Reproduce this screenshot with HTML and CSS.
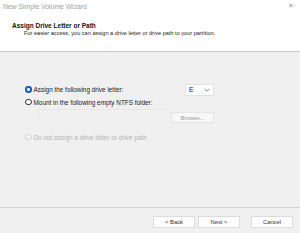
FILE: index.html
```html
<!DOCTYPE html>
<html>
<head>
<meta charset="utf-8">
<link rel="stylesheet" href="styles.css">
</head>
<body>
<div class="window">
  <div class="header">
    <div class="titlebar">
      <span class="title">New Simple Volume Wizard</span>
      <span class="close">&#x2715;</span>
    </div>
    <div class="heading">Assign Drive Letter or Path</div>
    <div class="subheading">For easier access, you can assign a drive letter or drive path to your partition.</div>
  </div>
  <div class="content">
    <div class="row row1">
      <span class="radio checked"></span>
      <span class="label">Assign the following drive letter:</span>
      <span class="select"><span>E</span><svg class="chev" width="6" height="4" viewBox="0 0 6 4"><path d="M0.5 0.8 L3 3.2 L5.5 0.8" fill="none" stroke="#555" stroke-width="0.7"/></svg></span>
    </div>
    <div class="row row2">
      <span class="radio"></span>
      <span class="label">Mount in the following empty NTFS folder:</span>
    </div>
    <div class="row row-field">
      <span class="field"></span>
      <span class="btn browse">Browse...</span>
    </div>
    <div class="row row3 disabled">
      <span class="radio off"></span>
      <span class="label">Do not assign a drive letter or drive path</span>
    </div>
  </div>
  <div class="footer">
    <span class="btn">&lt; Back</span>
    <span class="btn">Next &gt;</span>
    <span class="btn cancel">Cancel</span>
  </div>
</div>
</body>
</html>
```
FILE: styles.css
```css
html, body {
  margin: 0;
  padding: 0;
}
body {
  width: 300px;
  height: 233px;
  overflow: hidden;
  background: #f0f0f0;
  font-family: "Liberation Sans", Arial, sans-serif;
  font-size: 5.6px;
  color: #222;
}
.window {
  display: flex;
  flex-direction: column;
  height: 233px;
}
.header {
  background: #fff;
  height: 51px;
  border-bottom: 1px solid #c8c8c8;
  box-sizing: content-box;
}
.titlebar {
  display: flex;
  justify-content: space-between;
  align-items: center;
  height: 12px;
  padding: 0 6px 0 3px;
}
.title {
  color: #a0a0a0;
  font-size: 6.8px;
}
.close {
  color: #999;
  font-size: 6.5px;
}
.heading {
  margin: 10px 0 0 12px;
  font-weight: bold;
  font-size: 6.5px;
  color: #111;
}
.subheading {
  margin: 1px 0 0 24px;
  color: #222;
}
.content {
  flex: 1;
  padding: 31px 0 0 25px;
  border-bottom: 1px solid #d6d6d6;
}
.row {
  display: flex;
  align-items: center;
  width: 189px;
}
.row1 {
  height: 13px;
}
.row2 {
  height: 12px;
}
.radio {
  width: 6.5px;
  height: 6.5px;
  border: 0.8px solid #333;
  border-radius: 50%;
  box-sizing: border-box;
  margin-right: 2px;
  background: #fff;
  flex: none;
}
.radio.checked {
  border: 2px solid #0a5fc0;
  background: #fff;
}
.radio.off {
  border-color: #d2d2d2;
  background: #f4f4f4;
}
.label {
  flex: none;
  font-size: 6.4px;
}
.select {
  margin-left: auto;
  width: 29px;
  height: 12px;
  background: #fff;
  border: 1px solid #e2e2e2;
  box-sizing: border-box;
  display: flex;
  align-items: center;
  justify-content: space-between;
  padding: 0 3px 0 3px;
  font-size: 7px;
  color: #111;
}
.row-field {
  height: 15px;
  padding-left: 13px;
  box-sizing: border-box;
  align-items: flex-end;
}
.field {
  width: 131px;
  height: 14px;
  border: 1px solid #e8e8e8;
  border-right: none;
  border-bottom: none;
  box-sizing: border-box;
}
.btn {
  display: flex;
  align-items: center;
  justify-content: center;
  height: 11px;
  width: 43px;
  background: #fdfdfd;
  border: 1px solid #dcdcdc;
  box-sizing: border-box;
  color: #333;
  font-size: 5.8px;
}
.browse {
  margin-left: auto;
  color: #999;
  background: #f7f7f7;
  border-color: #e4e4e4;
}
.row3 {
  margin-top: 8px;
  height: 12px;
}
.disabled .label {
  color: #b5b5b5;
}
.footer {
  height: 25px;
  display: flex;
  align-items: flex-start;
  padding: 8px 7px 0 0;
  justify-content: flex-end;
  box-sizing: border-box;
}
.footer .btn {
  height: 12px;
  width: 42px;
  margin-left: 3px;
}
.footer .cancel {
  margin-left: 11px;
}
```
